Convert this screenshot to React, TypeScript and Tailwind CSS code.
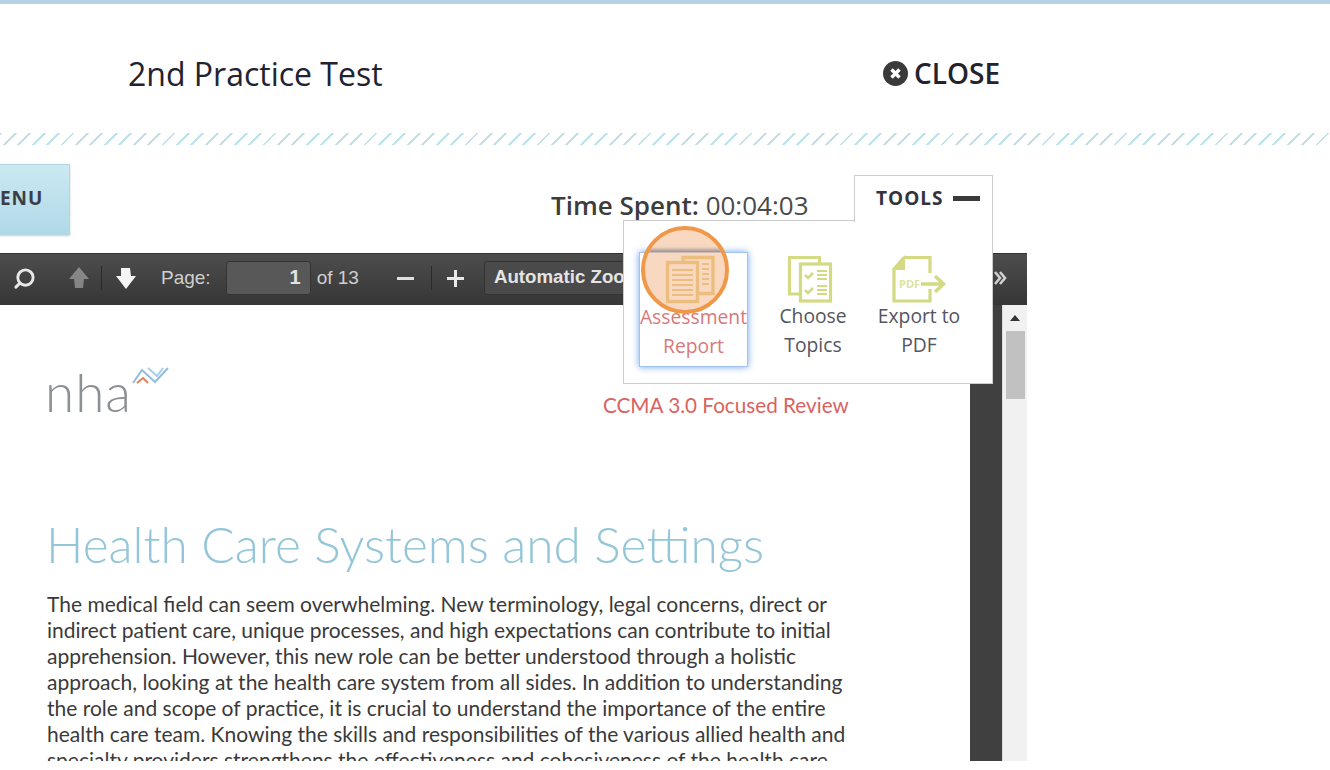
import { Search } from 'lucide-react';

const BODY_LINES = [
  'The medical field can seem overwhelming. New terminology, legal concerns, direct or',
  'indirect patient care, unique processes, and high expectations can contribute to initial',
  'apprehension. However, this new role can be better understood through a holistic',
  'approach, looking at the health care system from all sides. In addition to understanding',
  'the role and scope of practice, it is crucial to understand the importance of the entire',
  'health care team. Knowing the skills and responsibilities of the various allied health and',
  'specialty providers strengthens the effectiveness and cohesiveness of the health care',
];

function ArrowIcon({ down, dim }: { down?: boolean; dim?: boolean }) {
  return (
    <svg width="24" height="24" viewBox="0 0 24 24" className={dim ? 'opacity-50' : ''}>
      <path
        d={down ? 'M7 2h9l1 8h5L12 23 2 10h5z' : 'M12 1l10 12h-5l-1 9H8L7 13H2z'}
        fill={down ? '#f4f4f4' : '#c8c8c8'}
      />
    </svg>
  );
}

function ReportIcon() {
  return (
    <svg width="52" height="50" viewBox="0 0 52 50" fill="none" stroke="#e2c878" strokeWidth="3.4" className="mr-[6px]">
      <path d="M18 7V2.5h30v36H34" />
      <rect x="2.5" y="7.5" width="30" height="39" />
      <path d="M7 15h21M7 20h21M7 25h21M7 30h21M7 35h21M7 40h21M37 9h7M37 14h7M37 19h7M37 24h7M37 29h7" strokeWidth="2" />
    </svg>
  );
}

function TopicsIcon() {
  return (
    <svg width="46" height="48" viewBox="0 0 46 48" fill="none" stroke="#d4d984" strokeWidth="3.2" className="mr-[6px]">
      <path d="M12 39H2.5V2.5h30v6" />
      <rect x="13.5" y="9" width="30" height="37" />
      <path d="M18 20l3 3 5-5M18 35l3 3 5-5" strokeWidth="2.6" />
      <path d="M30 16h10M30 20h10M30 24h10M30 31h10M30 35h10M30 39h10" strokeWidth="2" />
    </svg>
  );
}

function PdfIcon() {
  return (
    <svg width="56" height="48" viewBox="0 0 56 48" fill="none">
      <path d="M13 2.5H39V18M39 34V46H3V14L13 2.5" stroke="#d4d984" strokeWidth="3.2" />
      <path d="M3 14L13 2.5V14z" fill="#d4d984" stroke="#d4d984" strokeWidth="2" />
      <text x="8" y="33" fontSize="11" fontWeight="700" fill="#dde2a0" fontFamily="Open Sans, sans-serif">PDF</text>
      <path d="M30 29H52M44 21l8.5 8-8.5 8" stroke="#d4d984" strokeWidth="3.6" />
    </svg>
  );
}

function ToolItem({ icon, lines, active }: { icon: React.ReactNode; lines: string[]; active?: boolean }) {
  return (
    <div
      className={`flex flex-col items-center pt-[2px] h-[115px] ${
        active ? 'w-[109px] border border-[#a0c4ee] shadow-[0_0_7px_#6fa6ec] text-[#d9787a]' : 'text-[#55555f]'
      }`}
    >
      <div className="h-[50px] flex items-center justify-center">{icon}</div>
      <div className="-mt-[3px] text-center text-[19.3px] leading-[29px] whitespace-nowrap">
        {lines.map(l => <div key={l}>{l}</div>)}
      </div>
    </div>
  );
}

export default function App() {
  return (
    <div className="w-[1330px] h-[770px] overflow-hidden bg-white font-['Open_Sans',sans-serif]">
      {/* Top bar */}
      <div className="h-[4px] bg-[#b5d3e6]" />

      {/* Title */}
      <div className="h-[129px] flex items-center pt-[10px]">
        <h1 className="ml-[128px] w-[748px] text-[32px] text-[#222230]">2nd Practice Test</h1>
        <div className="flex items-center gap-[6px] ml-[7px] text-[28px] font-semibold text-[#23232f]">
          <span className="w-[25px] h-[25px] rounded-full bg-[#3a3a3a] flex items-center justify-center">
            <svg width="13" height="13" viewBox="0 0 13 13"><path d="M2.5 2.5l8 8M10.5 2.5l-8 8" stroke="#fff" strokeWidth="3.4" /></svg>
          </span>
          <span className="-mt-[2px]">CLOSE</span>
        </div>
      </div>

      {/* Stripes */}
      <div className="h-[12px] bg-[repeating-linear-gradient(135deg,#bfe2e8_0,#bfe2e8_2px,transparent_2px,transparent_10.2px)]" />

      <div className="relative w-[1027px]">
        {/* Menu + time */}
        <div className="flex items-start h-[108px] pt-[19px]">
          <button className="-ml-[40px] w-[110px] h-[71px] pl-[20px] pb-[2px] text-left border border-[#b4d6e2] shadow-[0_1px_2px_#ccc] bg-gradient-to-b from-[#cbe9f2] to-[#b0d9e8] text-[19px] font-bold tracking-[1px] text-[#3a3f47]">
            MENU
          </button>
          <div className="ml-[481px] mt-[24px] text-[26px] leading-[34px] text-[#3c3c3c] whitespace-nowrap">
            <span className="font-semibold">Time Spent:</span> <span className="text-[#4a4a4a]">00:04:03</span>
          </div>
        </div>

        {/* PDF viewer */}
        <div className="h-[508px] flex flex-col overflow-hidden">
          <div className="h-[52px] shrink-0 flex items-center pb-[3px] bg-gradient-to-b from-[#4d4d4d] to-[#363636] border-t border-[#333] font-['Liberation_Sans',sans-serif] text-[#dcdcdc]">
            <Search size={23} strokeWidth={3} className="ml-[13px] -scale-x-100 text-[#e8e8e8]" />
            <div className="ml-[31px]"><ArrowIcon dim /></div>
            <div className="ml-[10px] w-px h-[24px] bg-[#2a2a2a]" />
            <div className="ml-[12px]"><ArrowIcon down /></div>
            <span className="ml-[23px] text-[19px] text-[#cfcfcf]">Page:</span>
            <div className="ml-[15px] w-[85px] h-[34px] rounded-[3px] border border-[#333] bg-[#585858] text-right pr-[9px] text-[20px] leading-[30px] font-bold text-[#e4e4e4]">1</div>
            <span className="ml-[6px] text-[19px] text-[#cfcfcf]">of 13</span>
            <div className="ml-[38px] w-[17px] h-[3px] bg-[#e0e0e0]" />
            <div className="ml-[17px] w-px h-[24px] bg-[#2a2a2a]" />
            <span className="ml-[15px] relative w-[17px] h-[17px] before:absolute before:left-0 before:top-[7px] before:w-[17px] before:h-[3px] before:bg-[#e8e8e8] after:absolute after:left-[7px] after:top-0 after:w-[3px] after:h-[17px] after:bg-[#e8e8e8]" />
            <div className="ml-[20px] w-[240px] h-[34px] pl-[9px] rounded-[3px] border border-[#333] bg-[#4a4a4a] text-[18.7px] leading-[30px] font-bold text-[#e4e4e4] whitespace-nowrap">Automatic Zoom</div>
            <svg width="14" height="16" viewBox="0 0 14 16" className="ml-[269px]" fill="none" stroke="#d0d0d0" strokeWidth="2.6">
              <path d="M2 2l5 6-5 6M7 2l5 6-5 6" />
            </svg>
          </div>

          <div className="flex-1 min-h-0 flex">
            {/* Page */}
            <div className="w-[970px] pl-[47px] overflow-hidden font-['Lato',sans-serif]">
              <div className="h-[209px] flex items-start">
                <div className="relative -ml-[2px] mt-[57px] w-[132px] text-[53px] leading-[60px] font-light tracking-[1px] text-[#8a9093]">
                  nha
                  <svg width="40" height="22" viewBox="0 0 40 22" className="absolute left-[85px] top-[3px]" fill="none" strokeWidth="2">
                    <path d="M3 18L12 5l13 12L38 3" stroke="#8fbfe0" />
                    <path d="M18 3l9 8 6-8" stroke="#a8cfe8" />
                    <path d="M7 18l6-5 5 5" stroke="#e4805c" />
                  </svg>
                </div>
                <div className="ml-[426px] mt-[85px] text-[20.7px] text-[#d9635f] whitespace-nowrap">CCMA 3.0 Focused Review</div>
              </div>
              <h2 className="-ml-[1px] text-[49.6px] leading-[60px] font-light text-[#94c6d9] whitespace-nowrap">Health Care Systems and Settings</h2>
              <div className="mt-[17px] text-[21px] leading-[26px] text-[#3a3a3a] whitespace-nowrap">
                {BODY_LINES.map(l => <div key={l}>{l}</div>)}
              </div>
            </div>
            <div className="w-[33px] bg-[#404040] border-r border-[#ddd]" />
            {/* Scrollbar */}
            <div className="w-[24px] bg-[#f1f1f1] pt-[10px] flex flex-col items-center">
              <div className="w-0 h-0 border-x-[5px] border-x-transparent border-b-[6px] border-b-[#333]" />
              <div className="mt-[10px] w-[19px] h-[68px] bg-[#c1c1c1]" />
            </div>
          </div>
        </div>

        {/* Tools dropdown */}
        <div className="absolute left-[623px] top-[30px] w-[370px] h-[209px]">
          <div className="absolute right-0 top-0 w-[139px] h-[47px] bg-white border border-b-0 border-[#ccc] flex items-center pl-[21px] pb-[2px] gap-[10px] z-10 text-[19px] font-bold tracking-[1px] text-[#33333d]">
            TOOLS
            <div className="w-[27px] h-[5px] bg-[#3a3a3a]" />
          </div>
          <div className="absolute left-0 top-[45px] w-[370px] h-[164px] bg-white border border-[#ccc] pl-[15px] pt-[31px] flex">
            <ToolItem active icon={<ReportIcon />} lines={['Assessment', 'Report']} />
            <div className="ml-[42px] w-[46px]">
              <ToolItem icon={<TopicsIcon />} lines={['Choose', 'Topics']} />
            </div>
            <div className="ml-[55px] w-[56px]">
              <ToolItem icon={<PdfIcon />} lines={['Export to', 'PDF']} />
            </div>
            {/* Highlight circle */}
            <div className="absolute left-[17px] top-[5px] w-[88px] h-[88px] rounded-full border-[4px] border-[#f0984a] bg-[#f4b183]/50 overflow-hidden">
              <div className="mt-[17px] h-[5px] bg-gradient-to-b from-transparent to-black/25" />
            </div>
          </div>
        </div>
      </div>
    </div>
  );
}
